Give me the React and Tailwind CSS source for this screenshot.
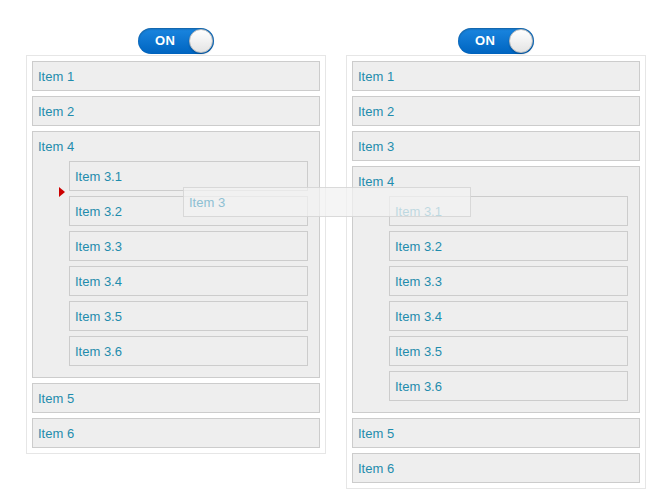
import React from "react";

const itemCls =
  "h-[30px] flex items-center pl-[5px] border border-[#cccccc] bg-[#eeeeee] text-[#1f8cad] text-[13px] leading-none";

function Item({ label }) {
  return <div className={itemCls}>{label}</div>;
}

function Toggle() {
  return (
    <div className="relative w-[76px] h-[26px] rounded-full bg-gradient-to-b from-[#1a86e0] to-[#0064c0] shadow-[inset_0_1px_2px_rgba(0,0,0,0.3)] flex items-center mb-px">
      <span className="ml-[17px] text-white font-bold text-[13px] tracking-wide">ON</span>
      <div className="absolute right-px top-px w-[24px] h-[24px] rounded-full bg-gradient-to-b from-white to-[#e4e4e4] border border-[#bbbbbb] shadow-[0_1px_2px_rgba(0,0,0,0.25)]" />
    </div>
  );
}

function Group({ label, children, marker }) {
  return (
    <div className="relative border border-[#cccccc] bg-[#eeeeee] pb-[11px]">
      <div className="h-[29px] flex items-center pl-[5px] text-[#1f8cad] text-[13px] leading-none">
        {label}
      </div>
      <div className="ml-[36px] mr-[11px] flex flex-col gap-[5px]">
        {children.map((c) => (
          <Item key={c} label={c} />
        ))}
      </div>
      {marker && (
        <div className="absolute left-[26px] top-[55px] w-0 h-0 border-y-[5px] border-y-transparent border-l-[6px] border-l-[#cc0000]" />
      )}
    </div>
  );
}

const subs = ["Item 3.1", "Item 3.2", "Item 3.3", "Item 3.4", "Item 3.5", "Item 3.6"];

function Column({ items }) {
  return (
    <div className="w-[300px] flex flex-col items-center">
      <Toggle />
      <div className="w-[300px] border border-[#e6e6e6] bg-white p-[5px] flex flex-col gap-[5px]">
        {items}
      </div>
    </div>
  );
}

export default function App() {
  return (
    <div
      className="relative w-[662px] h-[500px] bg-white pl-[26px] pt-[28px] flex gap-[20px] items-start"
      style={{ fontFamily: '"Liberation Sans", Arial, sans-serif' }}
    >
      <Column
        items={[
          <Item key="1" label="Item 1" />,
          <Item key="2" label="Item 2" />,
          <Group key="4" label="Item 4" marker>
            {subs}
          </Group>,
          <Item key="5" label="Item 5" />,
          <Item key="6" label="Item 6" />,
        ]}
      />
      <Column
        items={[
          <Item key="1" label="Item 1" />,
          <Item key="2" label="Item 2" />,
          <Item key="3" label="Item 3" />,
          <Group key="4" label="Item 4">
            {subs}
          </Group>,
          <Item key="5" label="Item 5" />,
          <Item key="6" label="Item 6" />,
        ]}
      />
      <div className="absolute left-[183px] top-[187px] w-[288px] h-[30px] flex items-center pl-[5px] border border-[rgba(200,200,200,0.6)] bg-[rgba(242,242,242,0.75)] text-[#8ec0d3] text-[13px] leading-none">
        Item 3
      </div>
    </div>
  );
}
